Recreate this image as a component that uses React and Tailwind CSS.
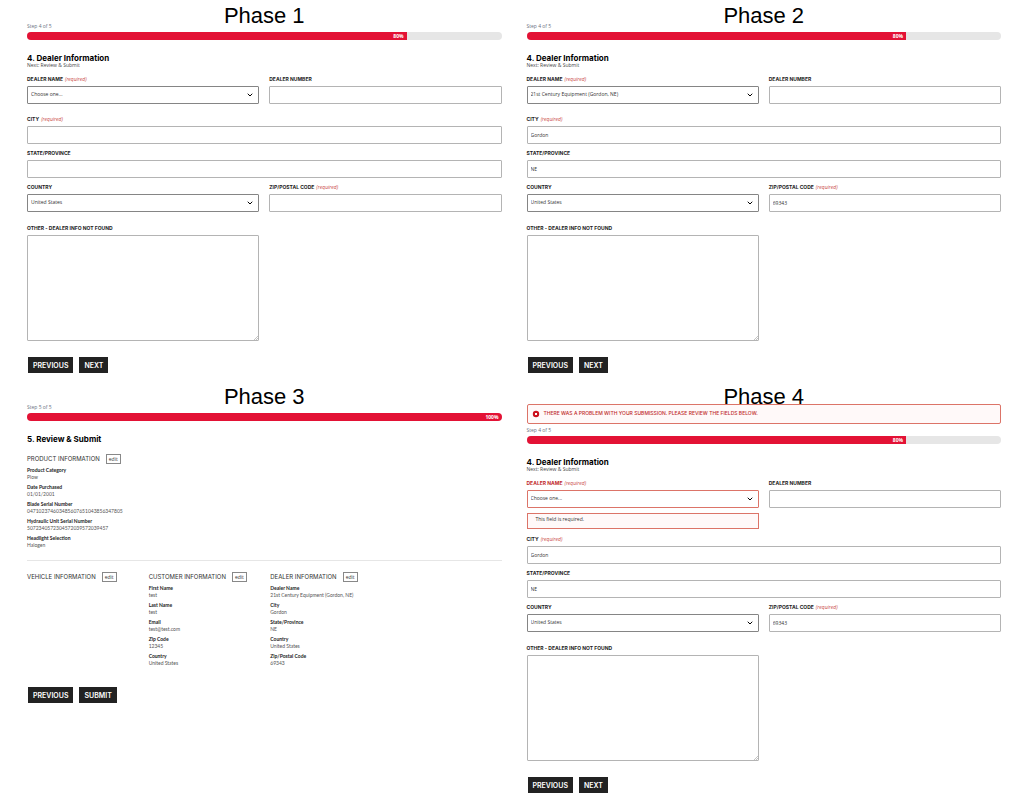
import React from 'react';
import { ChevronDown } from 'lucide-react';
import clsx from 'clsx';

const productFields = [
  ['Product Category', 'Plow'],
  ['Date Purchased', '01/01/2001'],
  ['Blade Serial Number', '047102374603485607651043856347805'],
  ['Hydraulic Unit Serial Number', '5072340572304572039572039457'],
  ['Headlight Selection', 'Halogen'],
];

const customerFields = [
  ['First Name', 'test'],
  ['Last Name', 'test'],
  ['Email', 'test@test.com'],
  ['Zip Code', '12345'],
  ['Country', 'United States'],
];

const dealerFields = [
  ['Dealer Name', '21st Century Equipment (Gordon, NE)'],
  ['City', 'Gordon'],
  ['State/Province', 'NE'],
  ['Country', 'United States'],
  ['Zip/Postal Code', '69343'],
];

function Progress({ step, percent }) {
  return (
    <div>
      <p className="text-[5px] leading-[8px] text-gray-500">Step {step} of 5</p>
      <div className="mt-0.5 h-2 rounded-full bg-[#e6e6e6] overflow-hidden">
        <div
          className="h-full bg-[#e31235] pr-[3px] flex items-center justify-end text-[5px] leading-none font-bold text-white"
          style={{ width: `${percent}%` }}
        >
          {percent}%
        </div>
      </div>
    </div>
  );
}

function Label({ id, text, required, error }) {
  return (
    <label
      htmlFor={id}
      className={clsx('block mb-[3px] text-[5px] leading-[8px] whitespace-nowrap', error ? 'text-[#c02b2b]' : 'text-[#222]')}
    >
      <span className="font-bold uppercase font-[Inter,sans-serif]">{text}</span>
      {required && <span className="ml-0.5 italic text-[#c9463f]">(required)</span>}
    </label>
  );
}

function TextField({ id, text, value, required }) {
  return (
    <div>
      <Label id={id} text={text} required={required} />
      <input
        id={id}
        type="text"
        defaultValue={value}
        className="block w-full h-[18px] px-[3px] border border-[#b4b4b4] rounded-[1px] bg-white text-[5px] text-[#333]"
      />
    </div>
  );
}

function SelectField({ id, text, value, required, error }) {
  return (
    <div>
      <Label id={id} text={text} required={required} error={error} />
      <div className="relative">
        <select
          id={id}
          defaultValue={value}
          className={clsx(
            'block w-full h-[18px] px-[3px] appearance-none border rounded-[1px] bg-white text-[5px] text-[#333]',
            error ? 'border-[#dc7468]' : 'border-[#858585]'
          )}
        >
          <option>{value}</option>
        </select>
        <ChevronDown className="absolute right-[5px] top-[5px] w-2 h-2 text-black pointer-events-none" strokeWidth={3} />
      </div>
      {error && (
        <p className="mt-[5px] h-4 px-2 pt-px border border-[#dc7468] bg-[#fff9f9] text-[5px] leading-[8px] text-[#333]">{error}</p>
      )}
    </div>
  );
}

function Buttons({ next }) {
  const style = 'h-4 px-[5px] bg-[#222] text-white text-[7px] leading-none font-semibold uppercase font-[Inter,sans-serif]';
  return (
    <div className="flex gap-1.5 pl-px">
      <button type="button" className={style}>Previous</button>
      <button type={next === 'Submit' ? 'submit' : 'button'} className={style}>{next}</button>
    </div>
  );
}

function Phase({ title, children }) {
  return (
    <section className="pt-[5px] pb-2">
      <h1 className="h-[21px] text-[22px] leading-[22px] text-center text-black font-['Liberation_Sans',sans-serif]">{title}</h1>
      {children}
    </section>
  );
}

function DealerForm({ id, dealer, city, state, zip, error }) {
  return (
    <form>
      {error && (
        <div className="relative -mt-[3px] mb-0.5 h-5 pl-1 flex items-center gap-1 border border-[#dc7468] rounded-[2px] bg-[#fff9f9] text-[5px] font-medium text-[#c02b2b] uppercase font-[Inter,sans-serif]">
          <svg viewBox="0 0 8 8" className="w-2 h-2">
            <circle cx="4" cy="4" r="3.2" fill="#cc0f1b" />
            <path d="M3.5 3.5l1 1M4.5 3.5l-1 1" stroke="#fff" strokeWidth="1.1" strokeLinecap="round" />
          </svg>
          There was a problem with your submission. Please review the fields below.
        </div>
      )}
      <div className={error ? '' : '-mt-1'}>
        <Progress step={4} percent={80} />
      </div>
      <h2 className="mt-[13px] text-[8px] leading-[10px] font-bold text-black font-[Inter,sans-serif]">4. Dealer Information</h2>
      <p className="text-[5px] leading-[5px] text-[#444]">Next: Review &amp; Submit</p>

      <div className="mt-[7px] grid grid-cols-2 gap-x-[10px]">
        <SelectField id={`${id}-dealer`} text="Dealer Name" value={dealer} required error={error} />
        <TextField id={`${id}-number`} text="Dealer Number" />
      </div>
      <div className={clsx('flex flex-col gap-[5px]', error ? 'mt-1.5' : 'mt-[11px]')}>
        <TextField id={`${id}-city`} text="City" value={city} required />
        <TextField id={`${id}-state`} text="State/Province" value={state} />
        <div className="grid grid-cols-2 gap-x-[10px]">
          <SelectField id={`${id}-country`} text="Country" value="United States" />
          <TextField id={`${id}-zip`} text="Zip/Postal Code" value={zip} required />
        </div>
      </div>
      <div className="mt-3 mb-4 grid grid-cols-2 gap-x-[10px]">
        <div>
          <Label id={`${id}-other`} text="Other - Dealer Info Not Found" />
          <div className="relative">
            <textarea id={`${id}-other`} className="block w-full h-[106px] p-[3px] resize-none border border-[#b4b4b4] rounded-[1px] text-[5px]" />
            <svg viewBox="0 0 4 4" className="absolute right-px bottom-px w-1 h-1">
              <path d="M0 4L4 0M2 4L4 2" stroke="#aaa" strokeWidth="0.7" />
            </svg>
          </div>
        </div>
      </div>
      <Buttons next="Next" />
    </form>
  );
}

function Summary({ title, fields }) {
  return (
    <div>
      <div className="flex items-center gap-1.5 h-[10px]">
        <h3 className="text-[6px] leading-[10px] text-[#333] uppercase whitespace-nowrap font-[Inter,sans-serif]">{title}</h3>
        <button type="button" className="h-[10px] px-0.5 border border-[#888] text-[5px] leading-none text-[#333]">edit</button>
      </div>
      <dl className="mt-[3px] flex flex-col gap-[3px] text-[5px] leading-[7px] whitespace-nowrap font-[Lato,sans-serif]">
        {fields.map(([name, value]) => (
          <div key={name}>
            <dt className="font-bold text-[#222]">{name}</dt>
            <dd className="text-[#555]">{value}</dd>
          </div>
        ))}
      </dl>
    </div>
  );
}

function Review() {
  return (
    <form>
      <div className="-mt-1">
        <Progress step={5} percent={100} />
      </div>
      <h2 className="mt-[13px] mb-[10px] text-[8px] leading-[10px] font-bold text-black font-[Inter,sans-serif]">5. Review &amp; Submit</h2>
      <Summary title="Product Information" fields={productFields} />
      <hr className="my-[11px] border-[#e6e6e6]" />
      <div className="mb-5 grid grid-cols-4 gap-3">
        <Summary title="Vehicle Information" fields={[]} />
        <Summary title="Customer Information" fields={customerFields} />
        <Summary title="Dealer Information" fields={dealerFields} />
      </div>
      <Buttons next="Submit" />
    </form>
  );
}

function App() {
  return (
    <main className="min-h-screen bg-white pl-[27px] pr-[23px] grid grid-cols-2 gap-x-[25px] content-start font-['Open_Sans',sans-serif]">
      <Phase title="Phase 1">
        <DealerForm id="p1" dealer="Choose one..." />
      </Phase>
      <Phase title="Phase 2">
        <DealerForm id="p2" dealer="21st Century Equipment (Gordon, NE)" city="Gordon" state="NE" zip="69343" />
      </Phase>
      <Phase title="Phase 3">
        <Review />
      </Phase>
      <Phase title="Phase 4">
        <DealerForm id="p4" dealer="Choose one..." city="Gordon" state="NE" zip="69343" error="This field is required." />
      </Phase>
    </main>
  );
}

export default App;
